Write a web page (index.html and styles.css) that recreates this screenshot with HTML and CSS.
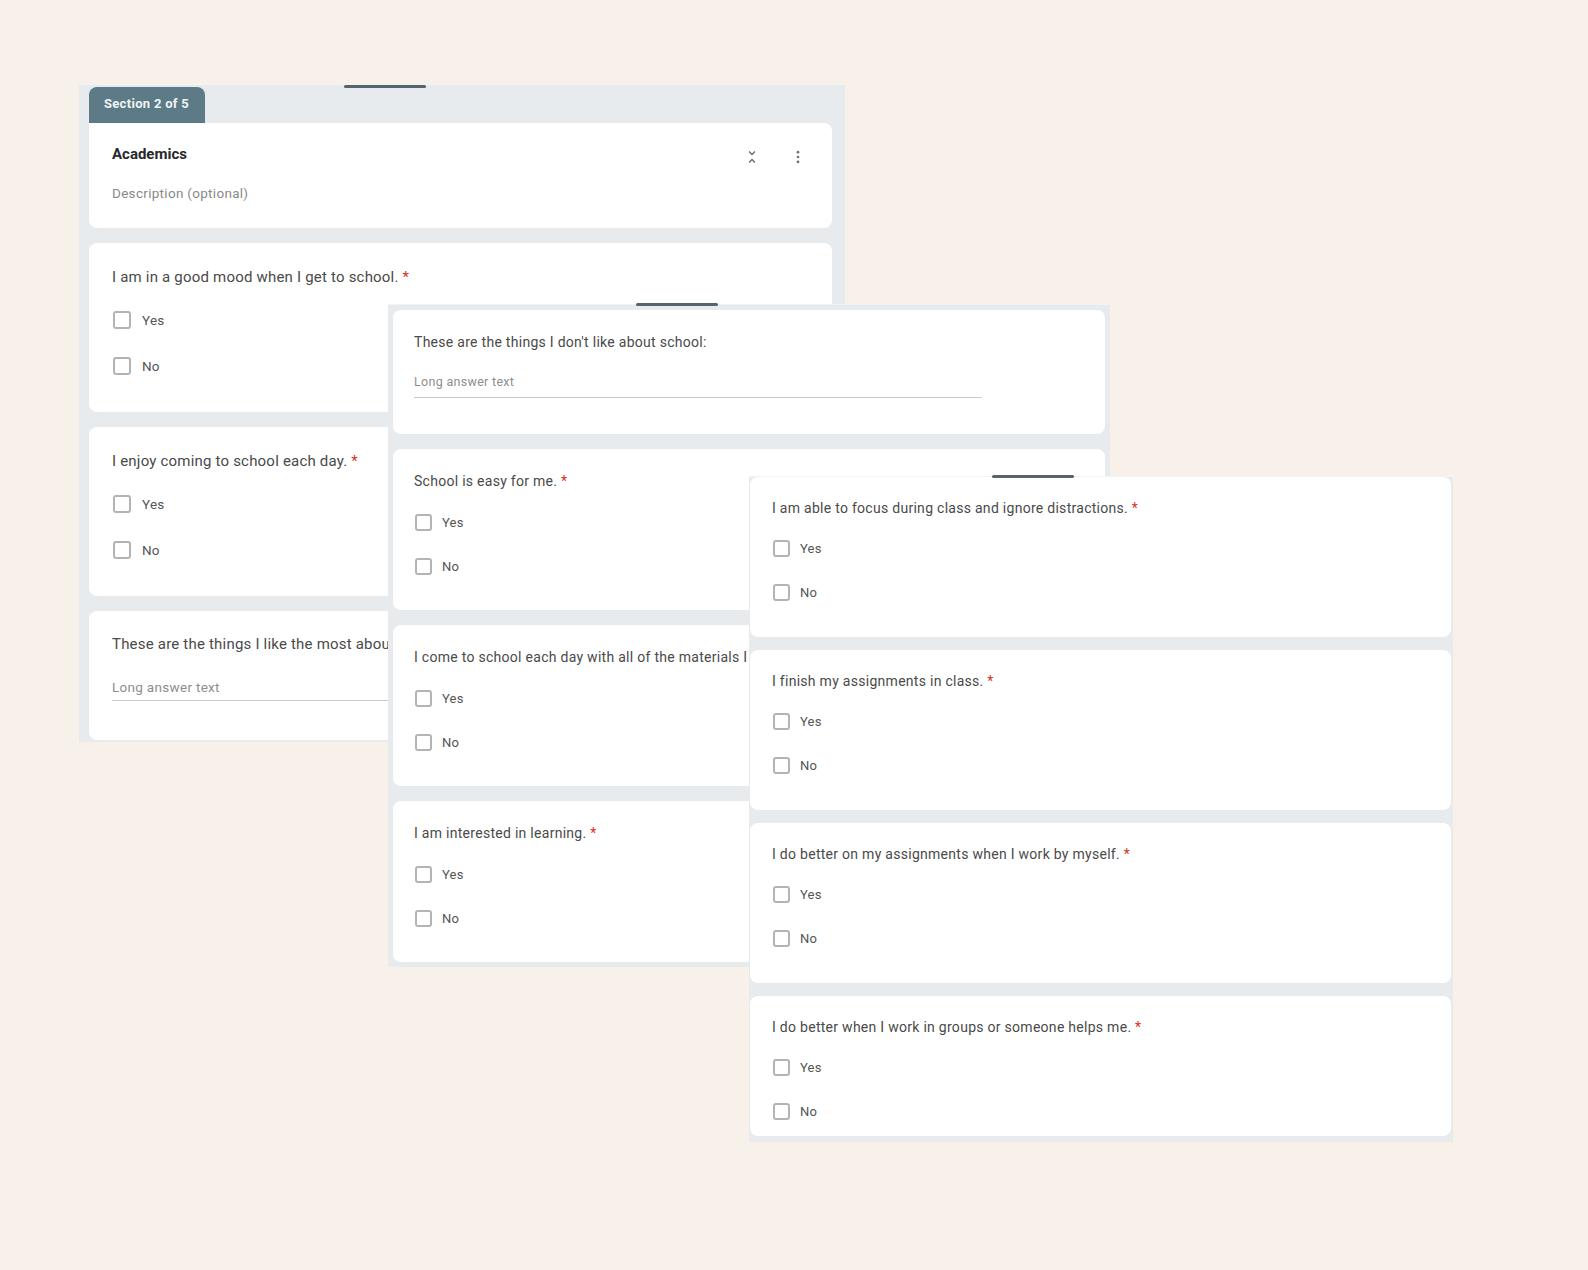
FILE: index.html
```html
<!DOCTYPE html>
<html lang="en">
<head>
<meta charset="utf-8">
<title>Form sections</title>
<link rel="stylesheet" href="styles.css">
</head>
<body>
<div class="canvas">

  <section class="panel p1">
    <span class="handle"></span>
    <div class="tab">Section 2 of 5</div>
    <div class="stack">
      <div class="card header-card">
        <div class="head-row">
          <div class="title">Academics</div>
          <div class="icons">
            <span class="icon">
              <svg viewBox="0 0 24 24" width="18" height="18"><path fill="#6b7075" d="M7.41 18.59L8.83 20 12 16.83 15.17 20l1.41-1.41L12 14l-4.59 4.59zm9.18-13.18L15.17 4 12 7.17 8.83 4 7.41 5.41 12 10l4.59-4.59z"/></svg>
            </span>
            <span class="icon">
              <svg viewBox="0 0 24 24" width="18" height="18"><circle cx="12" cy="5.5" r="1.8" fill="#6b7075"/><circle cx="12" cy="12" r="1.8" fill="#6b7075"/><circle cx="12" cy="18.5" r="1.8" fill="#6b7075"/></svg>
            </span>
          </div>
        </div>
        <div class="desc">Description (optional)</div>
      </div>

      <div class="card q">
        <div class="question">I am in a good mood when I get to school. <span class="req">*</span></div>
        <div class="options">
          <div class="opt"><span class="box"></span><span class="lbl">Yes</span></div>
          <div class="opt"><span class="box"></span><span class="lbl">No</span></div>
        </div>
      </div>

      <div class="card q">
        <div class="question">I enjoy coming to school each day. <span class="req">*</span></div>
        <div class="options">
          <div class="opt"><span class="box"></span><span class="lbl">Yes</span></div>
          <div class="opt"><span class="box"></span><span class="lbl">No</span></div>
        </div>
      </div>

      <div class="card long">
        <div class="question">These are the things I like the most about school:</div>
        <div class="field">Long answer text</div>
      </div>
    </div>
  </section>

  <section class="panel p2">
    <span class="handle"></span>
    <div class="stack">
      <div class="card long">
        <div class="question">These are the things I don't like about school:</div>
        <div class="field">Long answer text</div>
      </div>
      <div class="card q">
        <div class="question">School is easy for me. <span class="req">*</span></div>
        <div class="options">
          <div class="opt"><span class="box"></span><span class="lbl">Yes</span></div>
          <div class="opt"><span class="box"></span><span class="lbl">No</span></div>
        </div>
      </div>
      <div class="card q">
        <div class="question">I come to school each day with all of the materials I need. <span class="req">*</span></div>
        <div class="options">
          <div class="opt"><span class="box"></span><span class="lbl">Yes</span></div>
          <div class="opt"><span class="box"></span><span class="lbl">No</span></div>
        </div>
      </div>
      <div class="card q">
        <div class="question">I am interested in learning. <span class="req">*</span></div>
        <div class="options">
          <div class="opt"><span class="box"></span><span class="lbl">Yes</span></div>
          <div class="opt"><span class="box"></span><span class="lbl">No</span></div>
        </div>
      </div>
    </div>
  </section>

  <section class="panel p3">
    <span class="handle"></span>
    <div class="stack">
      <div class="card q">
        <div class="question">I am able to focus during class and ignore distractions. <span class="req">*</span></div>
        <div class="options">
          <div class="opt"><span class="box"></span><span class="lbl">Yes</span></div>
          <div class="opt"><span class="box"></span><span class="lbl">No</span></div>
        </div>
      </div>
      <div class="card q">
        <div class="question">I finish my assignments in class. <span class="req">*</span></div>
        <div class="options">
          <div class="opt"><span class="box"></span><span class="lbl">Yes</span></div>
          <div class="opt"><span class="box"></span><span class="lbl">No</span></div>
        </div>
      </div>
      <div class="card q">
        <div class="question">I do better on my assignments when I work by myself. <span class="req">*</span></div>
        <div class="options">
          <div class="opt"><span class="box"></span><span class="lbl">Yes</span></div>
          <div class="opt"><span class="box"></span><span class="lbl">No</span></div>
        </div>
      </div>
      <div class="card q last">
        <div class="question">I do better when I work in groups or someone helps me. <span class="req">*</span></div>
        <div class="options">
          <div class="opt"><span class="box"></span><span class="lbl">Yes</span></div>
          <div class="opt"><span class="box"></span><span class="lbl">No</span></div>
        </div>
      </div>
    </div>
  </section>

</div>
</body>
</html>
```

FILE: styles.css
```css
* { box-sizing: border-box; }

html, body {
  margin: 0;
  padding: 0;
  background: #f8f1e9;
  font-family: Roboto, "Liberation Sans", Arial, sans-serif;
  color: #4c4c4c;
}

.canvas {
  position: relative;
  width: 1588px;
  height: 1270px;
  overflow: hidden;
}

/* floating screenshot panels */
.panel {
  position: absolute;
  background: #e7ebee;
  border-top: 1px solid #f1f3f4;
}

.handle {
  position: absolute;
  top: -2px;
  height: 3px;
  width: 82px;
  background: #55656b;
  border-radius: 2px;
  z-index: 2;
}

.stack {
  display: flex;
  flex-direction: column;
  height: 100%;
  overflow: hidden;
}

.card {
  background: #ffffff;
  border-radius: 8px;
  flex: none;
}

.question {
  line-height: 20px;
  white-space: nowrap;
  color: #4a4a4a;
}

.req { color: #d93025; }

.options { display: flex; flex-direction: column; }

.opt {
  display: flex;
  align-items: center;
}

.box {
  flex: none;
  border: 2px solid #b4b4b4;
  border-radius: 3px;
  background: #fff;
}

.lbl { color: #555555; letter-spacing: 0.2px; }

.field {
  color: #8e8e8e;
  border-bottom: 1px solid #cbcbcb;
  line-height: 18px;
  letter-spacing: 0.3px;
}

/* ---------- panel 1 ---------- */
.p1 {
  left: 79px;
  top: 84px;
  width: 766px;
  height: 658px;
  padding: 2px 13px 0 10px;
  z-index: 1;
  overflow: hidden;
}
.p1 .handle { left: 265px; top: 0; }
.p1 .stack { gap: 15px; height: auto; }

.tab {
  display: inline-block;
  height: 37px;
  padding: 0 16px 0 15px;
  line-height: 33px;
  background: #5d7b87;
  color: #eef3f5;
  font-size: 13px;
  letter-spacing: 0.3px;
  font-weight: 700;
  border-radius: 8px 8px 0 0;
  margin-bottom: -1px;
}

.p1 .card { padding-left: 23px; padding-right: 22px; }

.header-card {
  height: 105px;
  padding-top: 21px;
  border-top-left-radius: 0;
}
.head-row {
  display: flex;
  justify-content: space-between;
  align-items: flex-start;
}
.title {
  font-size: 15px;
  font-weight: 700;
  color: #26282b;
  line-height: 20px;
}
.icons {
  display: flex;
  gap: 22px;
  margin-top: 1px;
}
.icon {
  width: 24px;
  height: 24px;
  display: flex;
  align-items: center;
  justify-content: center;
}
.desc {
  margin-top: 14px;
  font-size: 13.5px;
  letter-spacing: 0.3px;
  line-height: 20px;
  color: #8a8a8a;
}

.p1 .q { padding-top: 24px; padding-bottom: 23px; }
.p1 .question { font-size: 15px; letter-spacing: 0.2px; }
.p1 .options { margin-top: 10px; }
.p1 .opt { height: 46px; }
.p1 .box { width: 18px; height: 18px; margin-left: 1px; }
.p1 .lbl { font-size: 13.5px; margin-left: 11px; }

.p1 .long { height: 129px; padding-top: 23px; }
.p1 .long .field {
  margin-top: 23px;
  font-size: 13.5px;
  width: 600px;
  line-height: 20px;
  padding-bottom: 3px;
}

/* ---------- panel 2 ---------- */
.p2 {
  left: 388px;
  top: 304px;
  width: 722px;
  height: 663px;
  padding: 5px 5px 5px 5px;
  z-index: 2;
}
.p2 .handle { left: 248px; }
.p2 .stack { gap: 15px; }
.p2 .card { padding-left: 21px; padding-right: 21px; }

.p2 .q { height: 161px; padding-top: 22px; }
.p2 .long { height: 124px; padding-top: 22px; }
.p2 .long .field {
  margin-top: 21px;
  width: 568px;
  font-size: 12.5px;
  padding-bottom: 6px;
}

/* ---------- panel 3 ---------- */
.p3 {
  left: 749px;
  top: 476px;
  width: 704px;
  height: 666px;
  padding: 0 2px 6px 1px;
  z-index: 3;
}
.p3 .handle { left: 243px; }
.p3 .stack { gap: 13px; }
.p3 .card { padding-left: 22px; padding-right: 22px; }
.p3 .q { height: 160px; padding-top: 21px; }
.p3 .q.last { height: 140px; }
.p3 .options { margin-top: 8px; }

/* shared for panels 2 and 3 */
.p2 .question, .p3 .question { font-size: 14px; letter-spacing: 0.28px; }
.p2 .options { margin-top: 9px; }
.p2 .opt, .p3 .opt { height: 44px; }
.p2 .box, .p3 .box { width: 17px; height: 17px; margin-left: 1px; }
.p2 .lbl, .p3 .lbl { font-size: 13px; margin-left: 10px; }
```
